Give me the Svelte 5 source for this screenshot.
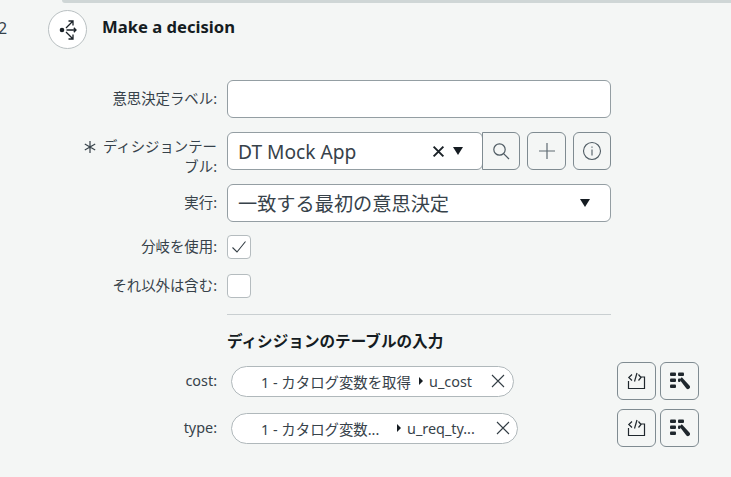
<script>
	const inputs = [
		{ name: 'cost:', step: '1 - カタログ変数を取得', field: 'u_cost', width: 283, stepWidth: 150, fieldWidth: 44 },
		{ name: 'type:', step: '1 - カタログ変数...', field: 'u_req_ty...', width: 287, stepWidth: 128, fieldWidth: 71 }
	]
</script>

<div class="page">
	<div class="progress"></div>

	<header class="step">
		<span class="step__num">2</span>
		<span class="step__icon">
			<svg width="20" height="22" viewBox="0 0 20 22" fill="none" stroke="#1a2127" stroke-width="1.3">
				<circle cx="4" cy="11" r="2.3" fill="#1a2127" stroke="none" />
				<path d="M8 9 15 2M10.5 2H15v4.5" />
				<path d="M8.5 11H18M15.8 8.8 18 11l-2.2 2.2" />
				<path d="M8 13l7 7M10.5 20H15v-4.5" />
			</svg>
		</span>
		<h2 class="step__title">Make a decision</h2>
	</header>

	<div class="form">
		<div class="row">
			<label class="label" for="label-input">意思決定ラベル:</label>
			<input id="label-input" class="field field--wide" type="text" />
		</div>

		<div class="row row--table">
			<label class="label label--req" for="table-input"><svg class="req" width="12" height="12" viewBox="0 0 12 12" fill="none" stroke="#37424a" stroke-width="1.2"><path d="M6 0v12M.8 3l10.4 6M11.2 3 .8 9" /></svg> ディシジョンテーブル:</label>
			<div class="controls">
				<div class="field field--table">
					<span id="table-input">DT Mock App</span>
					<span class="clear">
						<svg width="13" height="13" viewBox="0 0 12 12" stroke="#1a2127" stroke-width="1.8" fill="none"><path d="M1.5 1.5l9 9M10.5 1.5l-9 9" /></svg>
					</span>
					<span class="caret"></span>
				</div>
				<button class="btn btn--search" aria-label="search">
					<svg width="20" height="20" viewBox="0 0 20 20" fill="none" stroke="#4f5b63" stroke-width="1.2"><circle cx="8.5" cy="8.5" r="5.7" /><path d="M12.6 12.6 18 18" /></svg>
				</button>
				<button class="btn btn--add" aria-label="add">
					<svg width="18" height="18" viewBox="0 0 18 18" fill="none" stroke="#5f6b73" stroke-width="1.2"><path d="M9 1v16M1 9h16" /></svg>
				</button>
				<button class="btn btn--info" aria-label="info">
					<svg width="20" height="20" viewBox="0 0 20 20" fill="none" stroke="#4f5b63" stroke-width="1.1"><circle cx="10" cy="10" r="8.5" /><path d="M10 8.6v6" /><path d="M10 5.4v1.4" /></svg>
				</button>
			</div>
		</div>

		<div class="row row--exec">
			<label class="label" for="exec-input">実行:</label>
			<div class="field field--wide field--select">
				<span id="exec-input">一致する最初の意思決定</span>
				<span class="caret"></span>
			</div>
		</div>

		<div class="row row--check">
			<span class="label">分岐を使用:</span>
			<span class="check">
				<svg width="16" height="14" viewBox="0 0 16 14" fill="none" stroke="#333d44" stroke-width="1.1"><path d="M1.5 7.5 6 12 14.5 1.5" /></svg>
			</span>
		</div>

		<div class="row row--check2">
			<span class="label">それ以外は含む:</span>
			<span class="check"></span>
		</div>

		<div class="section">
			<h3 class="section__title">ディシジョンのテーブルの入力</h3>
		</div>

		{#each inputs as item}
			<div class="input-row">
				<span class="label label--input">{item.name}</span>
				<div class="pill" style="width: {item.width}px">
					<span class="pill__step" style="width: {item.stepWidth}px">{item.step}</span>
					<span class="pill__arrow"></span>
					<span class="pill__field" style="width: {item.fieldWidth}px">{item.field}</span>
					<svg class="pill__x" width="14" height="14" viewBox="0 0 14 14" fill="none" stroke="#333d44" stroke-width="1.1"><path d="M1 1l12 12M13 1 1 13" /></svg>
				</div>
				<div class="actions">
					<button class="btn btn--action" aria-label="script">
						<svg width="19" height="18" viewBox="0 0 19 18" fill="none" stroke="#1f272d" stroke-width="1.2"><path d="M1.5 9v7.5h16V5h-4" /><path d="M5 2.5 1.8 5.5 5 8.5" /><path d="M10 1 7.5 9.5" /><path d="M11.5 2.5 14 5.5 11.5 8.5" /></svg>
					</button>
					<button class="btn btn--action" aria-label="data">
						<svg width="20" height="18" viewBox="0 0 20 18" fill="#1f272d"><rect x="0" y="0.5" width="6" height="3.6" rx="1" /><rect x="8" y="0.5" width="6" height="3.6" rx="1" /><rect x="0" y="6.5" width="6" height="3.6" rx="1" /><rect x="8" y="6.5" width="2.5" height="3.6" rx="1" /><rect x="0" y="12.5" width="6" height="3.6" rx="1" /><path d="M9.5 7.4 11.8 5.2 19.4 13.6a2 2 0 0 1-.1 2.9 2 2 0 0 1-2.9-.1Z" /></svg>
					</button>
				</div>
			</div>
		{/each}
	</div>
</div>

<style>
	:global(body) {
		margin: 0;
		background: #f4f6f5;
	}

	.page {
		position: relative;
		width: 731px;
		height: 477px;
		overflow: hidden;
		font-family: "Noto Sans", "Noto Sans CJK JP", sans-serif;
		color: #37424a;
	}

	.progress {
		height: 3px;
		margin-left: 62px;
		background: #cfd6d6;
		border-radius: 0 0 0 3px;
	}

	.step {
		display: flex;
		align-items: center;
		height: 39px;
		margin-top: 7px;
	}
	.step__num {
		flex: none;
		width: 48px;
		margin-top: -4px;
		font-size: 16px;
		line-height: 20px;
		text-indent: -2px;
	}
	.step__icon {
		display: flex;
		align-items: center;
		justify-content: center;
		width: 39px;
		height: 39px;
		box-sizing: border-box;
		border: 1px solid #b9c0c2;
		border-radius: 50%;
		background: #fff;
	}
	.step__title {
		margin: -7px 0 0 15px;
		font-size: 16.64px;
		font-weight: 700;
		color: #151c22;
	}

	.form {
		display: flex;
		flex-direction: column;
		margin-top: 31px;
	}

	.row {
		display: grid;
		grid-template-columns: 218px auto;
		column-gap: 9px;
		align-items: center;
	}
	.row--table {
		margin-top: 14px;
	}
	.row--exec {
		margin-top: 14px;
	}
	.row--check {
		margin-top: 13px;
	}
	.row--check2 {
		margin-top: 15px;
	}

	.label {
		padding-right: 1px;
		text-align: right;
		font-size: 14.4px;
		line-height: 20px;
		color: #37424a;
	}
	.label--req {
		align-self: start;
		margin: 5px 0 -7px;
		padding-left: 84px;
	}
	.req {
		margin-right: 3px;
		vertical-align: -1px;
	}

	.field {
		box-sizing: border-box;
		height: 38px;
		background: #fff;
		border: 1px solid #949ea3;
		border-radius: 6px;
		font-family: inherit;
		font-size: 19.2px;
		color: #37424a;
	}
	.field--wide {
		width: 384px;
	}
	.field--select {
		display: flex;
		align-items: center;
		justify-content: space-between;
		padding: 0 20px 0 10px;
	}
	.field--table {
		display: flex;
		align-items: center;
		width: 256px;
		padding: 0 19px 0 10px;
	}
	.field--table span:first-child {
		flex: 1;
	}

	.clear {
		display: flex;
		margin-right: 8px;
	}
	.caret {
		width: 0;
		height: 0;
		border-left: 5.5px solid transparent;
		border-right: 5.5px solid transparent;
		border-top: 8px solid #151c22;
	}

	.controls {
		display: flex;
		align-items: center;
	}

	.btn {
		display: flex;
		align-items: center;
		justify-content: center;
		box-sizing: border-box;
		padding: 0;
		height: 38px;
		background: transparent;
		border: 1px solid #7f8b91;
		border-radius: 6px;
	}
	.btn--search {
		width: 38px;
		margin-left: -1px;
		border-radius: 0 6px 6px 0;
	}
	.btn--add {
		width: 39px;
		margin-left: 7px;
	}
	.btn--info {
		width: 38px;
		margin-left: 7px;
	}
	.btn--action {
		width: 39px;
	}

	.check {
		display: flex;
		align-items: center;
		justify-content: center;
		width: 24px;
		height: 24px;
		box-sizing: border-box;
		background: #fff;
		border: 1px solid #b5bcbf;
		border-radius: 4px;
	}

	.section {
		width: 384px;
		margin: 16px 0 2px 227px;
		border-top: 1px solid #c9cfd1;
	}
	.section__title {
		margin: 16px 0 0;
		font-size: 15.6px;
		line-height: 20px;
		font-weight: 700;
		color: #151c22;
	}

	.input-row {
		display: flex;
		align-items: center;
		position: relative;
		height: 38px;
		margin-top: 9px;
	}
	.label--input {
		width: 218px;
		box-sizing: border-box;
		flex: none;
	}
	.pill {
		display: flex;
		align-items: center;
		box-sizing: border-box;
		height: 31px;
		margin-left: 13px;
		padding-left: 29px;
		background: #fff;
		border: 1px solid #b0b8bb;
		border-radius: 16px;
		font-size: 14.4px;
		white-space: nowrap;
	}
	.pill__step {
		display: block;
	}
	.pill__arrow {
		width: 0;
		height: 0;
		margin: 0 6px 0 8px;
		border-top: 4px solid transparent;
		border-bottom: 4px solid transparent;
		border-left: 4px solid #151c22;
	}
	.pill__field {
		display: block;
	}
	.pill__x {
		margin-left: 18px;
	}

	.actions {
		position: absolute;
		left: 617px;
		top: 0;
		display: flex;
		gap: 4px;
	}
</style>
